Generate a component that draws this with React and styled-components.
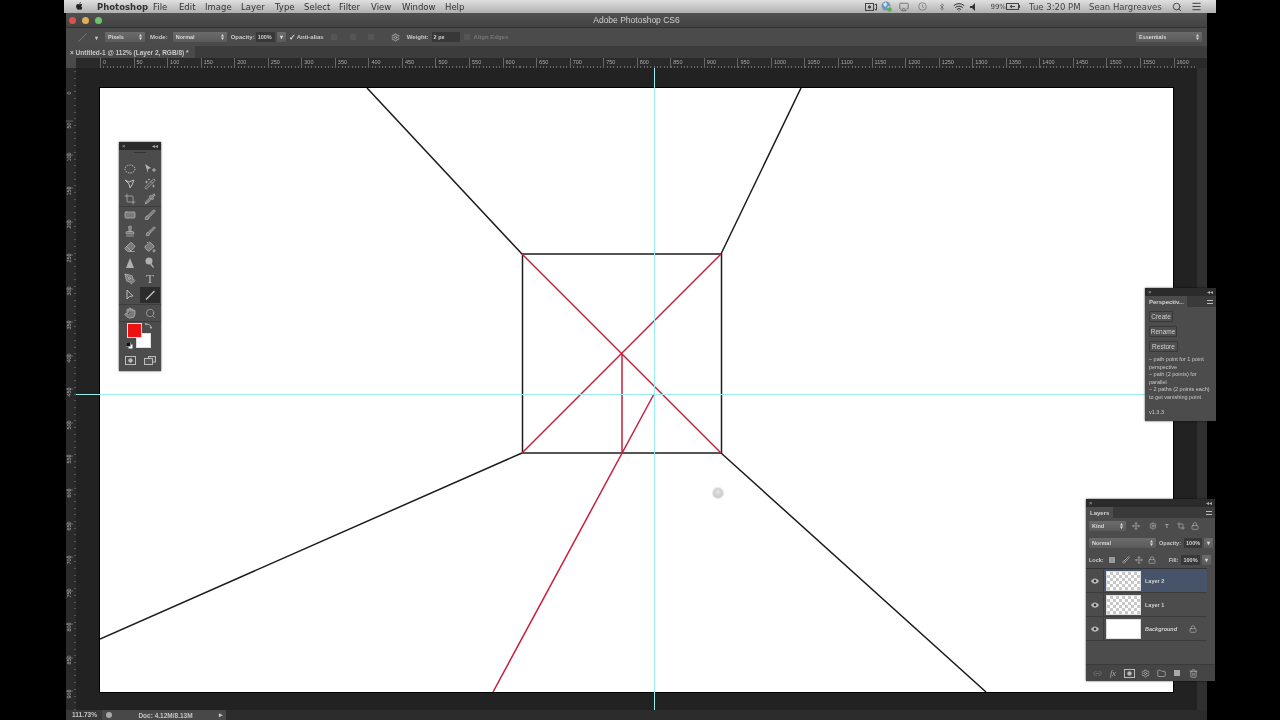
import React from 'react';
import styled, { createGlobalStyle } from 'styled-components';
import {
  Crop, Pipette, Brush, Stamp, Eraser, PaintBucket, Wand2, PenTool, Hand, Search, Bluetooth, Wifi,
  Link2, Folder, Trash2, Lock, Move, Bandage, Airplay, Settings, Menu, Slash,
} from 'lucide-react';

const GlobalStyle = createGlobalStyle`
  html, body { margin: 0; padding: 0; background: #000; overflow: hidden; }
  * { box-sizing: border-box; }
`;

const SCALE = 33.56;

// desktop, black bars left and right belong to the video
const Stage = styled.div`
  position: relative;
  width: 1280px;
  height: 720px;
  background: #000;
  padding: 0 64px;
  overflow: hidden;
  font-family: "Liberation Sans", Arial, sans-serif;
  filter: blur(0.35px);
`;

const MenuBar = styled.div`
  height: 13px;
  background: linear-gradient(#e0e0e0, #b0b0b0);
  display: flex;
  align-items: center;
  font-family: "DejaVu Sans", sans-serif;
  font-size: 8.5px;
  color: #333;
  padding-left: 11px;
`;

const MenuItem = styled.span`
  flex: 0 0 ${p => p.$w}px;
  font-weight: ${p => (p.$bold ? 700 : 400)};
  white-space: nowrap;
`;

const MenuRight = styled.div`
  margin-left: auto;
  display: flex;
  align-items: center;
  padding-right: 12px;
`;

const Tray = styled.span`
  flex: 0 0 ${p => p.$w}px;
  display: flex;
  align-items: center;
  white-space: nowrap;
  color: #444;
  font-size: ${p => p.$fs || 8.5}px;
`;

const Window = styled.div`
  margin-left: 2px;
  width: 1141px;
  height: 707px;
  display: flex;
  flex-direction: column;
  background: #222;
`;

const TitleBar = styled.div`
  height: 15px;
  flex: none;
  position: relative;
  background: linear-gradient(#505050, #434343);
  border-bottom: 1px solid #333;
  display: flex;
  align-items: center;
  justify-content: center;
  font-size: 8.5px;
  color: #cfcfcf;
`;

const Lights = styled.div`
  position: absolute;
  left: 3px;
  top: 4px;
  display: flex;
  gap: 6px;
`;

const Light = styled.span`
  width: 7px;
  height: 7px;
  border-radius: 50%;
  background: ${p => p.$c};
`;

const OptionsBar = styled.div`
  height: 18px;
  flex: none;
  background: #4b4b4b;
  display: flex;
  align-items: center;
  font-size: 6px;
  font-weight: 700;
  color: #c4c4c4;
  padding-left: 12px;
`;

const Select = styled.div`
  flex: 0 0 ${p => p.$w}px;
  height: ${p => p.$h || 10}px;
  margin-left: ${p => p.$ml || 0}px;
  background: linear-gradient(#6c6c6c, #5a5a5a);
  border-radius: 1px;
  display: flex;
  align-items: center;
  justify-content: space-between;
  padding: 0 3px;
  font-size: 5.5px;
  font-weight: 700;
  color: #d8d8d8;
  white-space: nowrap;
`;

const Field = styled.div`
  flex: 0 0 ${p => p.$w}px;
  height: ${p => p.$h || 10}px;
  margin-left: ${p => p.$ml || 0}px;
  background: #383838;
  color: #d0d0d0;
  font-size: 5.5px;
  font-weight: 700;
  display: flex;
  align-items: center;
  padding: 0 2px;
`;

const Label = styled.span`
  margin-left: ${p => p.$ml || 0}px;
  color: ${p => p.$c || '#c8c8c8'};
  white-space: nowrap;
`;

const Box = styled.span`
  flex: 0 0 6px;
  height: 6px;
  margin-left: ${p => p.$ml || 0}px;
  background: ${p => p.$c || '#555'};
`;

const OptIcon = styled.span`
  display: flex;
  margin-left: ${p => p.$ml || 0}px;
  color: ${p => p.$c || '#c4c4c4'};
  font-size: ${p => p.$fs || 6}px;
`;

const Workspaces = styled(Select)`
  margin-left: auto;
  margin-right: 5px;
`;

const TabBar = styled.div`
  height: 12px;
  flex: none;
  background: #3c3c3c;
  display: flex;
`;

const DocTab = styled.div`
  width: 129px;
  background: #4a4a4a;
  font-size: 6.5px;
  font-weight: 700;
  color: #c8c8c8;
  display: flex;
  align-items: center;
  padding-left: 4px;
  gap: 3px;
  white-space: nowrap;
`;

const RulerTop = styled.div`
  height: 10px;
  flex: none;
  background: #2a2a2a;
  display: flex;
  padding-right: 10px;
`;

const RulerCorner = styled.div`
  flex: 0 0 10px;
  background: #4a4a4a;
`;

const RulerStrip = styled.div`
  flex: 1;
  display: flex;
  overflow: hidden;
  padding-left: 24px;
  background: repeating-linear-gradient(90deg, #666 0 1px, transparent 1px ${SCALE / 10}px) 24px 100% / 100% 2px no-repeat;
`;

const RulerMark = styled.span`
  flex: 0 0 ${SCALE}px;
  border-left: 1px solid #666;
  padding-left: 2px;
  font-size: 5.5px;
  line-height: 8px;
  height: 10px;
  color: #a8a8a8;
`;

const Main = styled.div`
  flex: 1;
  min-height: 0;
  display: flex;
`;

const RulerLeft = styled.div`
  flex: 0 0 10px;
  background: repeating-linear-gradient(0deg, #555 0 1px, transparent 1px ${SCALE / 5}px) 100% 0 / 2px 100% no-repeat, #2a2a2a;
  padding-top: 20px;
  overflow: hidden;
`;

const RulerVMark = styled.div`
  height: ${SCALE}px;
  border-top: 1px solid #666;
  writing-mode: vertical-rl;
  transform: rotate(180deg);
  font-size: 5.5px;
  color: #a8a8a8;
  display: flex;
  align-items: flex-end;
  line-height: 7px;
  padding-top: 26px;
`;

const Pasteboard = styled.div`
  flex: 1;
  background: #222;
  padding: 20px 0 0 24px;
`;

const Scrollbar = styled.div`
  flex: 0 0 10px;
  background: #303030;
`;

const Document = styled.div`
  width: 1073px;
  height: 604px;
  background: #fff;
  box-shadow: 0 0 0 1px #000;
`;

const DocDrawing = styled.svg`
  display: block;
`;

const StatusRow = styled.div`
  height: 10px;
  flex: none;
  display: flex;
  background: #2c2c2c;
  font-size: 6.5px;
  font-weight: 700;
  color: #c4c4c4;
`;

const Zoom = styled.div`
  flex: 0 0 36px;
  background: #383838;
  padding-left: 6px;
  line-height: 10px;
`;

const DocInfo = styled.div`
  flex: 0 0 124px;
  background: #484848;
  display: flex;
  align-items: center;
  padding: 0 3px 0 4px;
  justify-content: space-between;
`;

const StatusDot = styled.span`
  width: 6px;
  height: 6px;
  border-radius: 50%;
  background: #a8a8a8;
`;

const Guide = styled.div`
  position: absolute;
  background: #9ceeee;
  ${p => (p.$vertical
    ? `left: ${p.$at}px; top: 68px; width: 1px; height: 642px;`
    : `top: ${p.$at}px; left: 76px; height: 1px; width: 1069px;`)}
`;

const Cursor = styled.div`
  position: absolute;
  left: 713px;
  top: 488px;
  width: 10px;
  height: 10px;
  border-radius: 50%;
  background: radial-gradient(circle at 50% 40%, #e4e4e4, #bdbdbd);
  box-shadow: 0 0 2px #aaa;
`;

// floating panels over the document
const Panel = styled.div`
  position: absolute;
  left: ${p => p.$x}px;
  top: ${p => p.$y}px;
  width: ${p => p.$w}px;
  height: ${p => p.$h}px;
  background: #4c4c4c;
  color: #c8c8c8;
  box-shadow: 0 0 2px rgba(0, 0, 0, 0.7);
  display: flex;
  flex-direction: column;
`;

const PanelHead = styled.div`
  height: 8px;
  flex: none;
  background: #2b2b2b;
  display: flex;
  align-items: center;
  justify-content: space-between;
  padding: 0 3px;
  font-size: 6px;
  line-height: 8px;
  color: #aaa;
`;

const ToolSection = styled.div`
  display: grid;
  grid-template-columns: 20px 20px;
  grid-auto-rows: ${p => p.$row || 16}px;
  justify-content: center;
  padding: ${p => p.$pad || '0'};
  border-bottom: ${p => (p.$line ? '1px solid #3d3d3d' : 'none')};
`;

const Grabber = styled.div`
  height: 11px;
  padding-top: 2px;
  display: flex;
  justify-content: center;

  &::before {
    content: '';
    width: 12px;
    height: 1px;
    background: #333;
  }
`;

const Tool = styled.div`
  position: relative;
  display: flex;
  align-items: center;
  justify-content: center;
  color: #b4b4b4;
  background: ${p => (p.$active ? '#2c2c2c' : 'transparent')};
  font-family: "Liberation Serif", serif;
  font-size: 13px;

  .lucide {
    fill: ${p => (p.$outline ? 'none' : '#7a7a7a')};
    stroke-width: 1.5;
  }
`;

const Colors = styled.div`
  position: relative;
  height: 30px;
  margin: 1px 0 0 8px;
`;

const Swatch = styled.div`
  position: absolute;
  left: ${p => p.$x}px;
  top: ${p => p.$y}px;
  z-index: ${p => p.$z || 0};
  width: 15px;
  height: 15px;
  background: ${p => p.$c};
  border: 1px solid #ddd;
`;

const ColorIcon = styled.span`
  position: absolute;
  left: ${p => p.$x}px;
  top: ${p => p.$y}px;
  display: flex;
`;

const PanelTabs = styled.div`
  height: 11px;
  flex: none;
  background: #3a3a3a;
  display: flex;
  align-items: stretch;
  justify-content: space-between;
  padding-right: 3px;
`;

const PanelTab = styled.div`
  background: #4c4c4c;
  width: ${p => p.$w}px;
  font-size: 6px;
  font-weight: 700;
  color: #d4d4d4;
  display: flex;
  align-items: center;
  padding-left: 4px;
  white-space: nowrap;
`;

const PanelMenu = styled.span`
  align-self: center;
  width: 6px;
  height: 4px;
  border-top: 1px solid #bbb;
  border-bottom: 1px solid #bbb;
`;

const ScriptBody = styled.div`
  padding: 4px;
  display: flex;
  flex-direction: column;
  align-items: flex-start;
  gap: 4px;
`;

const ScriptButton = styled.div`
  height: 11px;
  width: ${p => p.$w}px;
  background: #4f4f4f;
  border: 1px solid #383838;
  border-radius: 1px;
  font-size: 6.5px;
  line-height: 9px;
  text-align: center;
  color: #d0d0d0;
`;

const ScriptNote = styled.div`
  font-size: 5.5px;
  line-height: 7.5px;
  color: #c8c8c8;
`;

const LayerControls = styled.div`
  display: flex;
  align-items: center;
  height: ${p => p.$h}px;
  padding: 0 3px;
  font-size: 5.5px;
  font-weight: 700;
  color: #cfcfcf;
`;

const SmallIcon = styled.span`
  display: flex;
  justify-content: center;
  flex: 0 0 ${p => p.$w || 14}px;
  color: #b0b0b0;
`;

const LayerList = styled.div`
  flex: 1;
  margin-right: 8px;
  border-top: 1px solid #333;
  display: flex;
  flex-direction: column;
`;

const LayerRow = styled.div`
  height: 24px;
  display: flex;
  align-items: center;
  border-bottom: 1px solid #3c3c3c;
`;

const LayerEye = styled.span`
  flex: 0 0 18px;
  height: 100%;
  display: flex;
  align-items: center;
  justify-content: center;
  border-right: 1px solid #3c3c3c;
`;

const LayerBody = styled.div`
  flex: 1;
  height: 100%;
  display: flex;
  align-items: center;
  padding-left: 2px;
  gap: 4px;
  background: ${p => (p.$active ? '#475369' : 'transparent')};
  font-size: 5.5px;
  font-weight: 700;
  font-style: ${p => (p.$italic ? 'italic' : 'normal')};
  color: #d4d4d4;
`;

const Thumb = styled.div`
  width: 35px;
  height: 20px;
  border: 1px solid #ddd;
  background: ${p => (p.$plain
    ? '#fff'
    : 'repeating-conic-gradient(#c8c8c8 0 25%, #fff 0 50%) 0 0 / 6px 6px')};
`;

const LayerLock = styled.span`
  margin-left: auto;
  margin-right: 10px;
  display: flex;
  color: #aaa;
`;

const PanelFoot = styled.div`
  height: 17px;
  flex: none;
  background: #454545;
  border-top: 1px solid #3a3a3a;
  display: flex;
  align-items: center;
  padding-left: 4px;
  gap: 2px;
  font-family: "Liberation Serif", serif;
  font-size: 8px;
  font-style: italic;
`;

const Apple = () => (
  <svg width="9" height="10" viewBox="0 0 24 24" fill="#222">
    <path d="M17 12.6c0-2.6 2.1-3.8 2.2-3.9-1.2-1.8-3.1-2-3.8-2-1.6-.2-3.1.9-3.9.9s-2.1-.9-3.4-.9C6.300 6.700 4.700 7.700 3.800 9.200 2 12.400 3.300 17 5.100 19.600c.9 1.300 1.900 2.700 3.300 2.600 1.300 0 1.800-.8 3.400-.8s2 .8 3.400.8 2.300-1.300 3.200-2.600c1-1.500 1.400-2.900 1.400-3-.1 0-2.800-1.100-2.800-4zM14.400 4.800c.7-.9 1.200-2.100 1.100-3.300-1 0-2.300.7-3 1.500-.7.8-1.200 2-1.100 3.200 1.200.1 2.300-.6 3-1.400z" />
  </svg>
);

const Ellipse = () => (
  <svg width="12" height="12" viewBox="0 0 12 12" fill="none" stroke="#c0c0c0" strokeDasharray="1.500 1">
    <ellipse cx="6" cy="6" rx="5" ry="4" />
  </svg>
);

const LassoPoly = () => (
  <svg width="12" height="12" viewBox="0 0 12 12" fill="none" stroke="#c0c0c0">
    <path d="M1 2l4 2 5-2-2 5-2 3-1-4z" />
  </svg>
);

const MoveArrow = () => (
  <svg width="13" height="12" viewBox="0 0 13 12" fill="#b4b4b4">
    <path d="M1 1l6 4-3 1 0 4z" />
    <path d="M8 7h4M10 5v4" stroke="#b4b4b4" fill="none" />
  </svg>
);

const Cone = () => (
  <svg width="12" height="12" viewBox="0 0 12 12" fill="#b0b0b0">
    <path d="M6 1l4 10H2z" />
  </svg>
);

const Smudge = () => (
  <svg width="12" height="12" viewBox="0 0 12 12" fill="#b0b0b0">
    <circle cx="5" cy="4" r="3.500" />
    <path d="M7 6l3 4-1 1-3-4z" />
  </svg>
);

const DirectSelect = () => (
  <svg width="12" height="12" viewBox="0 0 12 12" fill="#bbb" stroke="#bbb">
    <path d="M3 1v9l2.500-2.500L9 7z" fill="none" />
  </svg>
);

const LineTool = () => (
  <svg width="12" height="12" viewBox="0 0 12 12" stroke="#c8c8c8" strokeWidth="1.200">
    <path d="M2 10.500L10.500 2" />
  </svg>
);

const QuickMask = () => (
  <svg width="11" height="9" viewBox="0 0 11 9" fill="none" stroke="#bbb">
    <rect x=".5" y=".5" width="10" height="8" />
    <circle cx="5.500" cy="4.500" r="1.800" fill="#bbb" />
  </svg>
);

const ScreenMode = () => (
  <svg width="12" height="9" viewBox="0 0 12 9" fill="#555" stroke="#bbb">
    <rect x="4.500" y=".5" width="7" height="5.500" />
    <rect x=".5" y="2.500" width="8" height="6" />
  </svg>
);

const DefaultColors = () => (
  <svg width="7" height="7" viewBox="0 0 7 7">
    <rect x="2.500" y="2.500" width="4" height="4" fill="#fff" />
    <rect x="0" y="0" width="4.500" height="4.500" fill="#111" stroke="#ccc" strokeWidth=".5" />
  </svg>
);

const SwapColors = () => (
  <svg width="7" height="6" viewBox="0 0 7 6" fill="none" stroke="#bbb" strokeWidth=".9">
    <path d="M1 1c3 0 5 1 5 4M0 1l1.500-1M0 1l1.500 1M5 4l1 1.500L7 4" />
  </svg>
);

const Eye = () => (
  <svg width="8" height="6" viewBox="0 0 8 6">
    <path d="M0 3c2-3.500 6-3.500 8 0-2 3.500-6 3.500-8 0z" fill="#bbb" />
    <circle cx="4" cy="3" r="1.300" fill="#333" />
  </svg>
);

const Battery = () => (
  <svg width="15" height="7" viewBox="0 0 15 7" fill="none" stroke="#444">
    <rect x=".5" y=".5" width="12" height="6" />
    <path d="M13.500 2v3" />
    <path d="M9 3.500H4M6 2L4 3.500 6 5" />
  </svg>
);

const Screencast = () => (
  <svg width="12" height="8" viewBox="0 0 12 8" fill="none" stroke="#444">
    <rect x=".5" y=".5" width="8" height="7" />
    <circle cx="4.500" cy="4" r="1.200" fill="#444" />
    <path d="M9.500 2l2-1v6l-2-1" />
  </svg>
);

const Globe = () => (
  <svg width="11" height="11" viewBox="0 0 11 11">
    <circle cx="5" cy="5" r="4.500" fill="#6d97bd" />
    <path d="M2 3l3-2 1 3-2 2zM6 6l3-1-1 3z" fill="#d9e6ef" />
    <circle cx="8.500" cy="8.500" r="2.300" fill="#5cb04a" />
  </svg>
);

const TimeMachine = () => (
  <svg width="9" height="9" viewBox="0 0 9 9" fill="none" stroke="#777" strokeWidth=".8">
    <circle cx="4.500" cy="4.500" r="3.800" />
    <path d="M4.500 2.500v2.200l1.500 1" />
  </svg>
);

const Sound = () => (
  <svg width="7" height="8" viewBox="0 0 7 8" fill="#333">
    <path d="M0 3h2l3-3v8L2 5H0z" />
  </svg>
);

const Chevrons = () => (
  <svg width="3" height="6" viewBox="0 0 3 6" fill="#ddd">
    <path d="M0 2.500L1.500 0 3 2.500zM0 3.500L1.500 6 3 3.500z" />
  </svg>
);

const MENUS = [
  ['Photoshop', 56, true], ['File', 26], ['Edit', 26], ['Image', 36], ['Layer', 34], ['Type', 29],
  ['Select', 35], ['Filter', 32], ['View', 31], ['Window', 43], ['Help', 30],
];

const TOOLS_TOP = [
  [<Ellipse />], [<MoveArrow />], [<LassoPoly />], [<Wand2 size={12} />, true], [<Crop size={12} />, true], [<Pipette size={12} />],
];
const TOOLS_MID = [
  [<Bandage size={12} />], [<Brush size={12} />], [<Stamp size={12} />], [<Brush size={11} />], [<Eraser size={12} />], [<PaintBucket size={12} />],
  [<Cone />], [<Smudge />], [<PenTool size={12} />], ['T'], [<DirectSelect />], [<LineTool />],
];

const HORIZONTAL_MARKS = Array.from({ length: 33 }, (_, i) => i * 50);
const VERTICAL_MARKS = Array.from({ length: 19 }, (_, i) => i * 50);

const App = () => (
  <Stage>
    <GlobalStyle />
    <MenuBar>
      <MenuItem $w={22}><Apple /></MenuItem>
      {MENUS.map(([name, w, bold]) => <MenuItem key={name} $w={w} $bold={bold}>{name}</MenuItem>)}
      <MenuRight>
        <Tray $w={16}><Screencast /></Tray>
        <Tray $w={18}><Globe /></Tray>
        <Tray $w={19}><Airplay size={10} strokeWidth={1.500} /></Tray>
        <Tray $w={20}><TimeMachine /></Tray>
        <Tray $w={15}><Bluetooth size={8} color="#666" /></Tray>
        <Tray $w={17}><Wifi size={12} color="#333" /></Tray>
        <Tray $w={20}><Sound /></Tray>
        <Tray $w={15} $fs={7}>99%</Tray>
        <Tray $w={23}><Battery /></Tray>
        <Tray $w={60}>Tue 3:20 PM</Tray>
        <Tray $w={83}>Sean Hargreaves</Tray>
        <Tray $w={19}><Search size={10} strokeWidth={2} color="#333" /></Tray>
        <Tray $w={13}><Menu size={11} strokeWidth={2} color="#333" /></Tray>
      </MenuRight>
    </MenuBar>

    <Window>
      <TitleBar>
        <Lights>
          <Light $c="#d9524f" />
          <Light $c="#e2ad55" />
          <Light $c="#6fc369" />
        </Lights>
        Adobe Photoshop CS6
      </TitleBar>

      <OptionsBar>
        <OptIcon><Slash size={9} strokeWidth={1} /></OptIcon>
        <OptIcon $ml={8}>▾</OptIcon>
        <Select $w={40} $ml={7}>Pixels <Chevrons /></Select>
        <Label $ml={5}>Mode:</Label>
        <Select $w={54} $ml={5}>Normal <Chevrons /></Select>
        <Label $ml={4}>Opacity:</Label>
        <Field $w={19} $ml={1}>100%</Field>
        <Select $w={7} $ml={2}>▾</Select>
        <OptIcon $ml={3} $c="#ddd" $fs={8}>✓</OptIcon>
        <Label $ml={1}>Anti-alias</Label>
        <Box $ml={7} />
        <Box $ml={13} />
        <Box $ml={12} />
        <OptIcon $ml={17} $c="#bbb"><Settings size={9} /></OptIcon>
        <Label $ml={7}>Weight:</Label>
        <Field $w={28} $ml={3}>2 px</Field>
        <Box $ml={4} />
        <Label $ml={4} $c="#777">Align Edges</Label>
        <Workspaces $w={66}>Essentials <Chevrons /></Workspaces>
      </OptionsBar>

      <TabBar>
        <DocTab>× Untitled-1 @ 112% (Layer 2, RGB/8) *</DocTab>
      </TabBar>

      <RulerTop>
        <RulerCorner />
        <RulerStrip>
          {HORIZONTAL_MARKS.map(n => <RulerMark key={n}>{n}</RulerMark>)}
        </RulerStrip>
      </RulerTop>

      <Main>
        <RulerLeft>
          {VERTICAL_MARKS.map(n => <RulerVMark key={n}>{n}</RulerVMark>)}
        </RulerLeft>
        <Pasteboard>
          <Document>
            <DocDrawing width="1073" height="604" viewBox="100 88 1073 604" fill="none" strokeWidth="1.500">
              <g stroke="#1c1c20">
                <path d="M367 88L522 254M801 88L721 254M522 453L100 639M721 453L986 692" />
                <rect x="522.500" y="254" width="199" height="199" />
              </g>
              <g stroke="#c8213f">
                <path d="M522 254L721 453M721 254L522 453M622 353V453M654 394L493 692" />
              </g>
            </DocDrawing>
          </Document>
        </Pasteboard>
        <Scrollbar />
      </Main>

      <StatusRow>
        <Zoom>111.73%</Zoom>
        <DocInfo>
          <StatusDot />
          <span>Doc: 4.12M/8.13M</span>
          <span>▸</span>
        </DocInfo>
      </StatusRow>
    </Window>

    <Guide $vertical $at={654} />
    <Guide $at={394} />
    <Cursor />

    <Panel $x={119} $y={142} $w={42} $h={229}>
      <PanelHead><span>×</span><span>◂◂</span></PanelHead>
      <Grabber />
      <ToolSection $line $row={15}>
        {TOOLS_TOP.map(([t, outline], i) => <Tool key={i} $outline={outline}>{t}</Tool>)}
      </ToolSection>
      <ToolSection $line $pad="0 0 1px">
        {TOOLS_MID.map(([t], i) => <Tool key={i} $active={i === 11}>{t}</Tool>)}
      </ToolSection>
      <ToolSection $line>
        <Tool><Hand size={12} /></Tool>
        <Tool $outline><Search size={11} /></Tool>
      </ToolSection>
      <Colors>
        <Swatch $x={0} $y={0} $c="#ee1111" $z={1} />
        <Swatch $x={9} $y={10} $c="#fff" />
        <ColorIcon $x={18} $y={0}><SwapColors /></ColorIcon>
        <ColorIcon $x={-1} $y={19}><DefaultColors /></ColorIcon>
      </Colors>
      <ToolSection $row={14}>
        <Tool><QuickMask /></Tool>
        <Tool><ScreenMode /></Tool>
      </ToolSection>
    </Panel>

    <Panel $x={1145} $y={288} $w={71} $h={133}>
      <PanelHead><span>×</span><span>◂◂</span></PanelHead>
      <PanelTabs>
        <PanelTab $w={42}>Perspectiv...</PanelTab>
        <PanelMenu />
      </PanelTabs>
      <ScriptBody>
        <ScriptButton $w={24}>Create</ScriptButton>
        <ScriptButton $w={28}>Rename</ScriptButton>
        <ScriptButton $w={29}>Restore</ScriptButton>
        <ScriptNote>
          – path point for 1 point<br />perspective<br />– path (2 points) for<br />parallel<br />
          – 2 paths (2 points each)<br />to get vanishing point<br /><br />v1.3.3
        </ScriptNote>
      </ScriptBody>
    </Panel>

    <Panel $x={1086} $y={499} $w={129} $h={182}>
      <PanelHead><span>×</span><span>◂◂</span></PanelHead>
      <PanelTabs>
        <PanelTab $w={27}>Layers</PanelTab>
        <PanelMenu />
      </PanelTabs>
      <LayerControls $h={16}>
        <Select $w={37}>Kind <Chevrons /></Select>
        <SmallIcon $w={20}><Move size={8} /></SmallIcon>
        <SmallIcon><Settings size={8} /></SmallIcon>
        <SmallIcon>T</SmallIcon>
        <SmallIcon><Crop size={8} /></SmallIcon>
        <SmallIcon><Lock size={8} /></SmallIcon>
      </LayerControls>
      <LayerControls $h={17}>
        <Select $w={67}>Normal <Chevrons /></Select>
        <Label $ml={3}>Opacity:</Label>
        <Field $w={18} $ml={3}>100%</Field>
        <Select $w={8} $ml={2}>▾</Select>
      </LayerControls>
      <LayerControls $h={17}>
        <span>Lock:</span>
        <SmallIcon $w={16}><Box $c="#999" /></SmallIcon>
        <SmallIcon $w={12}><Brush size={8} /></SmallIcon>
        <SmallIcon $w={14}><Move size={8} /></SmallIcon>
        <SmallIcon $w={12}><Lock size={8} /></SmallIcon>
        <Label $ml={11}>Fill:</Label>
        <Field $w={18} $ml={3}>100%</Field>
        <Select $w={8} $ml={2}>▾</Select>
      </LayerControls>
      <LayerList>
        <LayerRow>
          <LayerEye><Eye /></LayerEye>
          <LayerBody $active><Thumb />Layer 2</LayerBody>
        </LayerRow>
        <LayerRow>
          <LayerEye><Eye /></LayerEye>
          <LayerBody><Thumb />Layer 1</LayerBody>
        </LayerRow>
        <LayerRow>
          <LayerEye><Eye /></LayerEye>
          <LayerBody $italic>
            <Thumb $plain />Background
            <LayerLock><Lock size={8} /></LayerLock>
          </LayerBody>
        </LayerRow>
      </LayerList>
      <PanelFoot>
        <SmallIcon><Link2 size={9} color="#777" /></SmallIcon>
        <SmallIcon>fx</SmallIcon>
        <SmallIcon><QuickMask /></SmallIcon>
        <SmallIcon><Settings size={9} /></SmallIcon>
        <SmallIcon><Folder size={9} /></SmallIcon>
        <SmallIcon><Box $c="#aaa" /></SmallIcon>
        <SmallIcon><Trash2 size={9} /></SmallIcon>
      </PanelFoot>
    </Panel>
  </Stage>
);

export default App;
